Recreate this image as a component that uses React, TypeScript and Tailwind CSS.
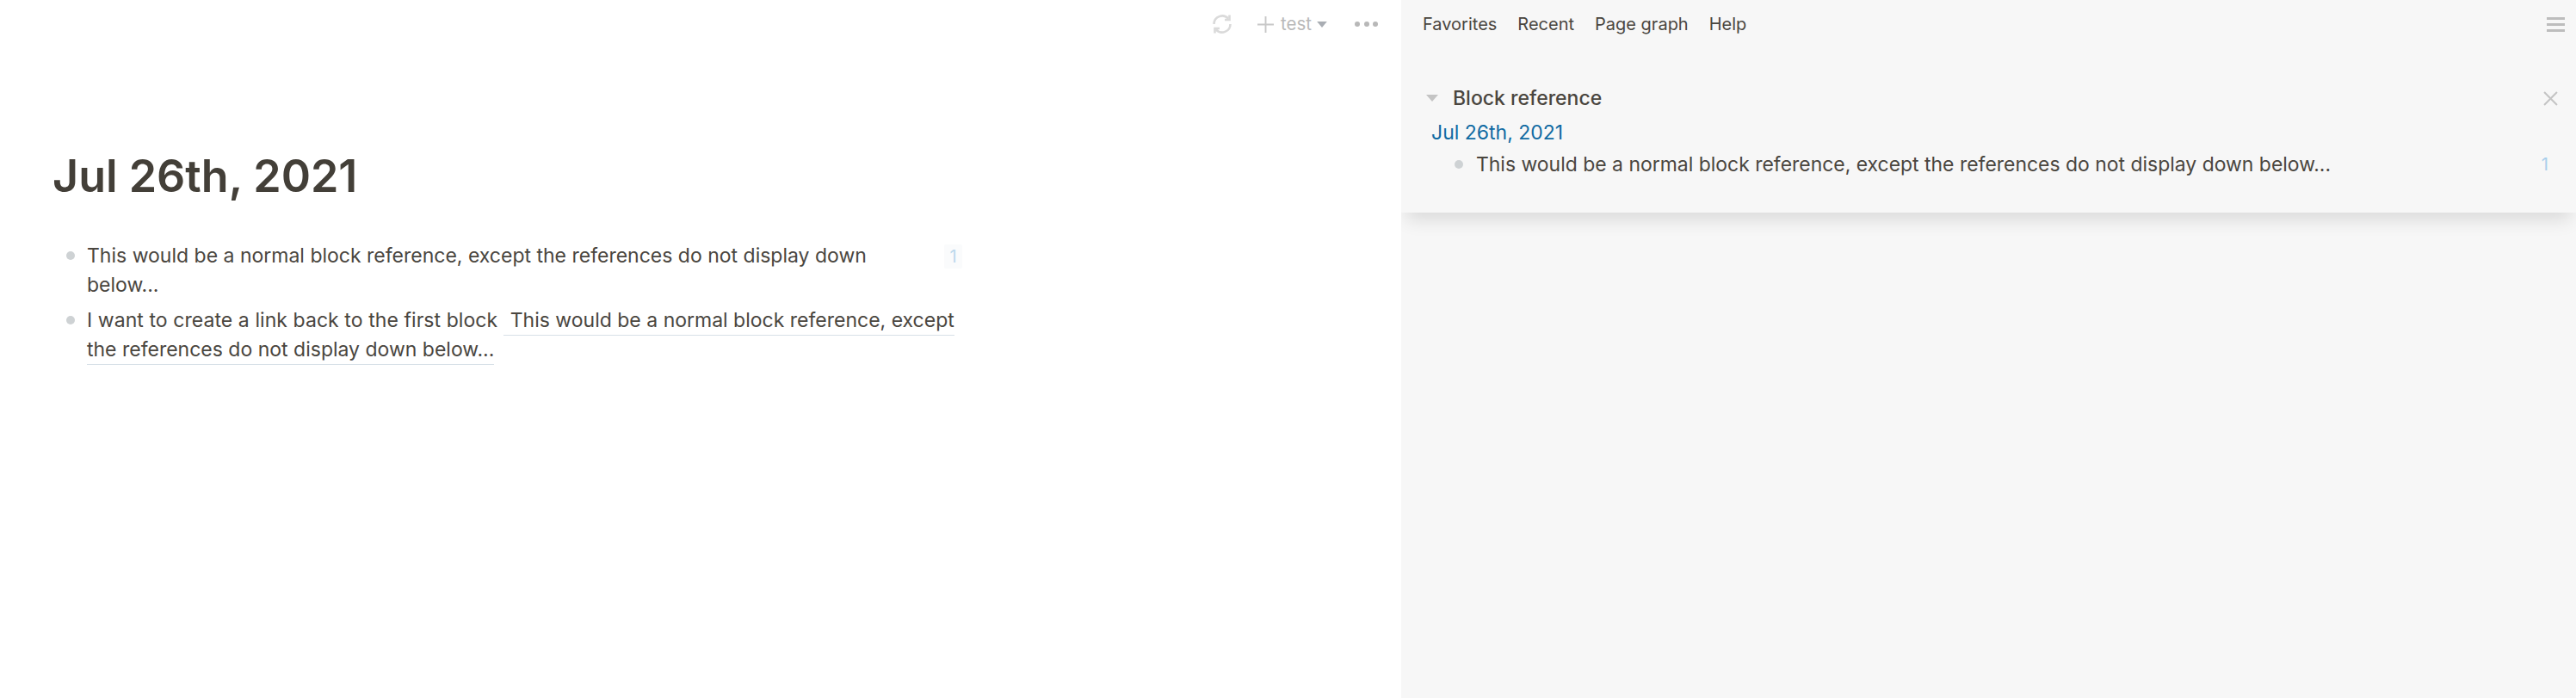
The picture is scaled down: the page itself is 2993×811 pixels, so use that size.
const menuItems = ["Favorites", "Recent", "Page graph", "Help"];

const BLOCK_TEXT = "This would be a normal block reference, except the references do not display down below...";

const Bullet = () => <span className="mt-[12px] h-[10px] w-[10px] shrink-0 rounded-full bg-[#ced2d4]" />;

const TopBar = () => (
    <div className="flex h-[56px] items-center justify-end pr-[27px]">
        <svg viewBox="0 0 22 22" fill="none" className="h-[22px] w-[22px] stroke-[#dadada]" strokeWidth="2.6">
            <path d="M20.5 11a9.5 9.5 0 0 1-16.6 6.3M1.5 11A9.5 9.5 0 0 1 18.1 4.7" />
            <path d="M19.5 0.5v5.5h-5.5M2.5 21.5v-5.5h5.5" />
        </svg>
        <svg viewBox="0 0 20 20" className="ml-[30px] h-[19px] w-[19px] stroke-[#c8c8c8]" strokeWidth="2">
            <path d="M10 0v20M0 10h20" />
        </svg>
        <span className="ml-[8px] text-[20.5px] text-[#b9b9b9]">test</span>
        <svg viewBox="0 0 10 6" className="ml-[6px] h-[7px] w-[12px] fill-[#a9adb3]">
            <path d="M0 0h10L5 6z" />
        </svg>
        <div className="ml-[32px] flex gap-[4.5px]">
            <span className="h-[6px] w-[6px] rounded-full bg-[#b8b8b8]" />
            <span className="h-[6px] w-[6px] rounded-full bg-[#b8b8b8]" />
            <span className="h-[6px] w-[6px] rounded-full bg-[#b8b8b8]" />
        </div>
    </div>
);

const MainPanel = () => (
    <div className="h-full w-[1628px] shrink-0 bg-white">
        <TopBar />
        <div className="pl-[61px]">
            <h1 className="mt-[114px] text-[52px] leading-[70px] font-semibold text-[#433f38]">Jul 26th, 2021</h1>
            <div className="mt-[40px] w-[1057px] text-[23px] leading-[34.4px] text-[#4a463f]">
                <div className="flex gap-[14px] pl-[16px]">
                    <Bullet />
                    <div className="flex-1 pr-[60px]">{BLOCK_TEXT}</div>
                    <span className="-ml-[21px] mt-[4px] flex h-[28px] w-[21px] justify-center rounded-[2px] bg-[#fafbfc] text-[20px] leading-[28px] text-[#bcd8ec]">1</span>
                </div>
                <div className="mt-[6px] flex gap-[14px] pl-[16px]">
                    <Bullet />
                    <div className="flex-1">
                        <span className="tracking-[0.07px]">I want to create a link back to the first block</span>{" "}
                        <span className="border-b border-[#d8e1e8] pb-[3px] pl-[8px]">{BLOCK_TEXT}</span>
                    </div>
                </div>
            </div>
        </div>
    </div>
);

const SidePanel = () => (
    <div className="h-full flex-1 overflow-hidden bg-[#f7f7f7]">
        <div className="flex h-[56px] items-center pr-[13px] pl-[25px] text-[20px] text-[#4a463f]">
            {menuItems.map((item) => (
                <span key={item} className="mr-[24px]">{item}</span>
            ))}
            <div className="ml-auto flex flex-col gap-[4px]">
                <span className="h-[3px] w-[21px] bg-[#bdbdbd]" />
                <span className="h-[3px] w-[21px] bg-[#bdbdbd]" />
                <span className="h-[3px] w-[21px] bg-[#bdbdbd]" />
            </div>
        </div>
        <div className="h-[191px] bg-[#f7f7f7] pt-[41px] shadow-[0_14px_20px_-6px_rgba(0,0,0,0.12)]">
            <div className="flex h-[34px] items-center pr-[21px] pl-[29px]">
                <svg viewBox="0 0 14 8" className="h-[8px] w-[14px] fill-[#c4c4c4]">
                    <path d="M0 0h14L7 8z" />
                </svg>
                <span className="ml-[17px] text-[23px] font-medium text-[#4a463f]">Block reference</span>
                <svg viewBox="0 0 16 16" className="ml-auto h-[17px] w-[17px] stroke-[#c4c4c4]" strokeWidth="1.9">
                    <path d="M1 1l14 14M15 1L1 15" />
                </svg>
            </div>
            <div className="mt-[6px] pl-[35px] text-[23px] leading-[34px] text-[#106ba3]">Jul 26th, 2021</div>
            <div className="mt-[3px] flex items-start pr-[32px] pl-[62px] text-[22.95px] leading-[34.4px] text-[#4a463f]">
                <Bullet />
                <span className="ml-[15px] flex-1">{BLOCK_TEXT}</span>
                <span className="text-[20px] text-[#a8cfec]">1</span>
            </div>
        </div>
    </div>
);

export default function App() {
    return (
        <div className="flex h-[811px] w-full overflow-hidden font-['Inter',sans-serif]">
            <MainPanel />
            <SidePanel />
        </div>
    );
}
